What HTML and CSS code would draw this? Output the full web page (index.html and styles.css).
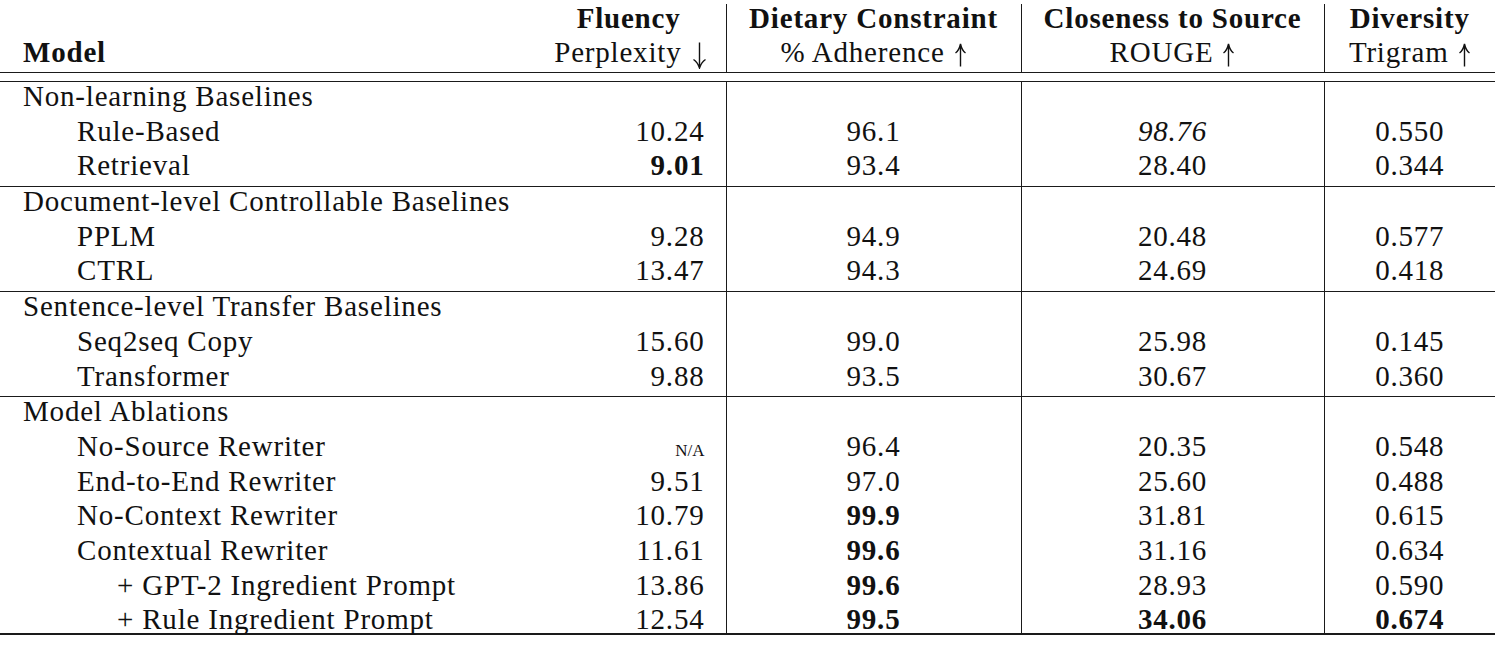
FILE: index.html
```html
<!DOCTYPE html>
<html lang="en">
<head>
<meta charset="utf-8">
<title>Results table</title>
<link rel="stylesheet" href="styles.css">
</head>
<body>
<table class="results">
  <colgroup>
    <col class="c-model">
    <col class="c-flu">
    <col class="c-diet">
    <col class="c-close">
    <col class="c-div">
  </colgroup>
  <thead>
    <tr>
      <th class="model-h"><div class="h1">&nbsp;</div><div class="h2"><b>Model</b></div></th>
      <th class="num-h"><div class="h1 flu-top"><b>Fluency</b></div><div class="h2">Perplexity <svg class="arr" width="15" height="27" viewBox="0 0 15 27" aria-label="down"><path d="M7.5 0.5V26M1.5 17.5Q5.5 20 7.5 26Q9.5 20 13.5 17.5"/></svg></div></th>
      <th class="ctr-h vl"><div class="h1"><b>Dietary Constraint</b></div><div class="h2">% Adherence <svg class="arr up" width="13" height="24" viewBox="0 0 13 24" aria-label="up"><path d="M6.5 23.5V1M1.5 10Q5 7.5 6.5 1Q8 7.5 11.5 10"/></svg></div></th>
      <th class="ctr-h vl"><div class="h1"><b>Closeness to Source</b></div><div class="h2">ROUGE <svg class="arr up" width="13" height="24" viewBox="0 0 13 24" aria-label="up"><path d="M6.5 23.5V1M1.5 10Q5 7.5 6.5 1Q8 7.5 11.5 10"/></svg></div></th>
      <th class="ctr-h vl"><div class="h1"><b>Diversity</b></div><div class="h2">Trigram <svg class="arr up" width="13" height="24" viewBox="0 0 13 24" aria-label="up"><path d="M6.5 23.5V1M1.5 10Q5 7.5 6.5 1Q8 7.5 11.5 10"/></svg></div></th>
    </tr>
  </thead>
  <tbody>
    <tr class="gap"><td></td><td></td><td></td><td></td><td></td></tr>

    <tr><td class="sec">Non-learning Baselines</td><td class="num"></td><td class="ctr vl"></td><td class="ctr vl"></td><td class="ctr vl"></td></tr>
    <tr><td class="sub">Rule-Based</td><td class="num">10.24</td><td class="ctr vl">96.1</td><td class="ctr vl"><i>98.76</i></td><td class="ctr vl">0.550</td></tr>
    <tr class="end"><td class="sub">Retrieval</td><td class="num"><b>9.01</b></td><td class="ctr vl">93.4</td><td class="ctr vl">28.40</td><td class="ctr vl">0.344</td></tr>

    <tr><td class="sec">Document-level Controllable Baselines</td><td class="num"></td><td class="ctr vl"></td><td class="ctr vl"></td><td class="ctr vl"></td></tr>
    <tr><td class="sub">PPLM</td><td class="num">9.28</td><td class="ctr vl">94.9</td><td class="ctr vl">20.48</td><td class="ctr vl">0.577</td></tr>
    <tr class="end"><td class="sub">CTRL</td><td class="num">13.47</td><td class="ctr vl">94.3</td><td class="ctr vl">24.69</td><td class="ctr vl">0.418</td></tr>

    <tr><td class="sec">Sentence-level Transfer Baselines</td><td class="num"></td><td class="ctr vl"></td><td class="ctr vl"></td><td class="ctr vl"></td></tr>
    <tr><td class="sub">Seq2seq Copy</td><td class="num">15.60</td><td class="ctr vl">99.0</td><td class="ctr vl">25.98</td><td class="ctr vl">0.145</td></tr>
    <tr class="end"><td class="sub">Transformer</td><td class="num">9.88</td><td class="ctr vl">93.5</td><td class="ctr vl">30.67</td><td class="ctr vl">0.360</td></tr>

    <tr><td class="sec">Model Ablations</td><td class="num"></td><td class="ctr vl"></td><td class="ctr vl"></td><td class="ctr vl"></td></tr>
    <tr><td class="sub">No-Source Rewriter</td><td class="num"><span class="na">N/A</span></td><td class="ctr vl">96.4</td><td class="ctr vl">20.35</td><td class="ctr vl">0.548</td></tr>
    <tr><td class="sub">End-to-End Rewriter</td><td class="num">9.51</td><td class="ctr vl">97.0</td><td class="ctr vl">25.60</td><td class="ctr vl">0.488</td></tr>
    <tr><td class="sub">No-Context Rewriter</td><td class="num">10.79</td><td class="ctr vl"><b>99.9</b></td><td class="ctr vl">31.81</td><td class="ctr vl">0.615</td></tr>
    <tr><td class="sub">Contextual Rewriter</td><td class="num">11.61</td><td class="ctr vl"><b>99.6</b></td><td class="ctr vl">31.16</td><td class="ctr vl">0.634</td></tr>
    <tr><td class="sub2">+ GPT-2 Ingredient Prompt</td><td class="num">13.86</td><td class="ctr vl"><b>99.6</b></td><td class="ctr vl">28.93</td><td class="ctr vl">0.590</td></tr>
    <tr class="last"><td class="sub2">+ Rule Ingredient Prompt</td><td class="num">12.54</td><td class="ctr vl"><b>99.5</b></td><td class="ctr vl"><b>34.06</b></td><td class="ctr vl"><b>0.674</b></td></tr>
  </tbody>
</table>
</body>
</html>
```

FILE: styles.css
```css
html, body {
  margin: 0;
  padding: 0;
  background: #ffffff;
}

body {
  font-family: "Liberation Serif", "Times New Roman", "DejaVu Serif", serif;
  font-size: 29px;
  color: #111111;
  letter-spacing: 0.8px;
}

.results {
  width: 1495px;
  table-layout: fixed;
  border-collapse: collapse;
  margin-top: 4px;
}

.c-model { width: 540px; }
.c-flu { width: 186px; }
.c-diet { width: 295px; }
.c-close { width: 303px; }
.c-div { width: 171px; }

.results th,
.results td {
  padding: 0;
  font-weight: normal;
  white-space: nowrap;
  vertical-align: top;
}

.results th {
  border-bottom: 1px solid #1a1a1a;
}

.h1 {
  line-height: 29px;
  height: 29px;
}

.h2 {
  line-height: 39px;
  height: 39px;
}

.arr {
  display: inline-block;
  vertical-align: -7px;
  margin-left: 2px;
}

.arr.up {
  vertical-align: -5px;
  margin-left: 1px;
}

.arr path {
  fill: none;
  stroke: #111111;
  stroke-width: 1.4;
}

.model-h {
  text-align: left;
  padding-left: 23px !important;
}

.num-h {
  text-align: right;
  padding-right: 19px !important;
}

.flu-top {
  padding-right: 26px;
}

.ctr-h {
  text-align: center;
}

.vl {
  border-left: 1px solid #1a1a1a;
}

.gap td {
  height: 8px;
  border-bottom: 1px solid #1a1a1a;
}

.results tbody td {
  line-height: 28px;
  padding-bottom: 6.7px;
}

.results tbody .gap td {
  line-height: 0;
  padding: 0;
}

.sec {
  padding-left: 23px !important;
}

.sub {
  padding-left: 77px !important;
}

.sub2 {
  padding-left: 117px !important;
}

.num {
  text-align: right;
  padding-right: 21px !important;
}

.ctr {
  text-align: center;
}

.end td {
  border-bottom: 1px solid #1a1a1a;
}

.results tbody .last td {
  border-bottom: 2px solid #1a1a1a;
  padding-bottom: 0;
}

.na {
  font-size: 17px;
  line-height: 0;
  letter-spacing: 0;
}
```
